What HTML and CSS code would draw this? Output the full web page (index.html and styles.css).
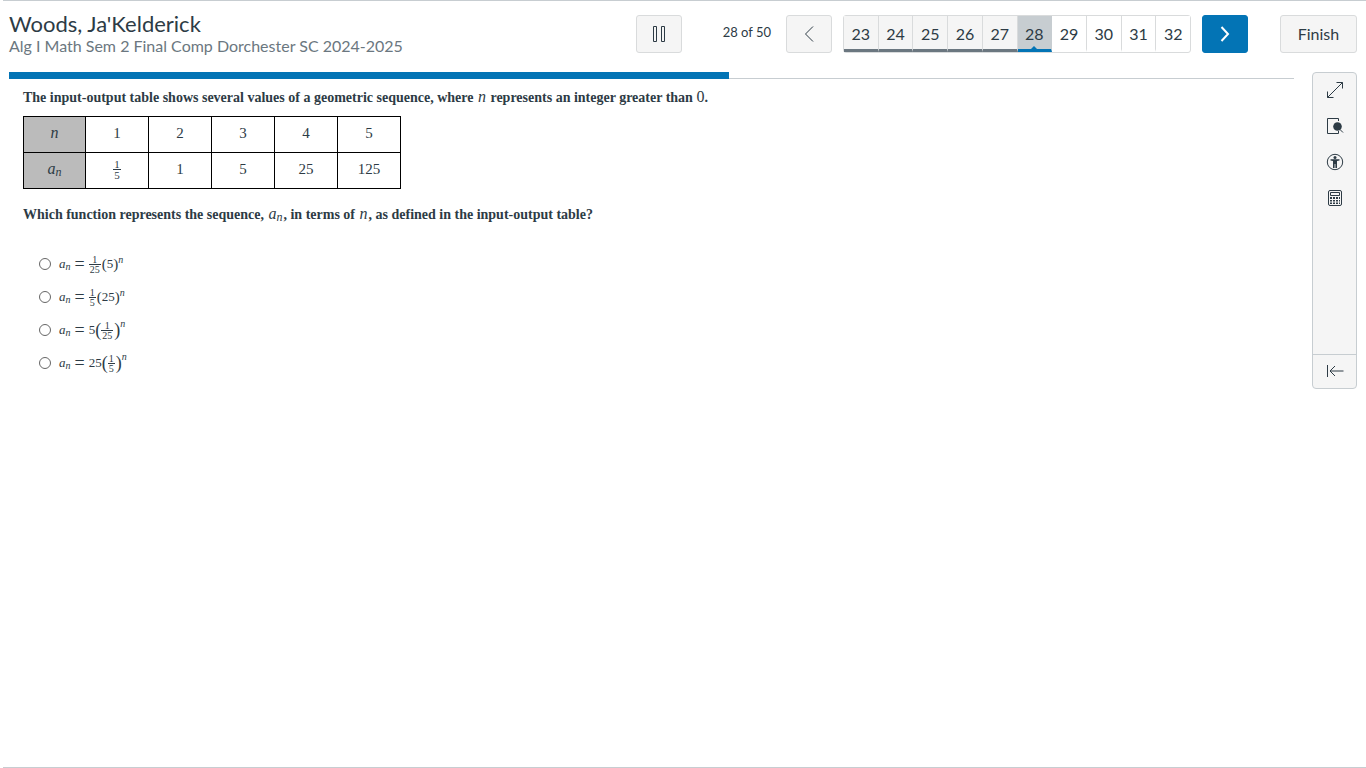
FILE: index.html
```html
<!DOCTYPE html>
<html lang="en">
<head>
    <meta charset="UTF-8">
    <meta name="viewport" content="width=device-width, initial-scale=1.0">
    <title>Alg I Math Sem 2 Final</title>
    <link rel="stylesheet" href="styles.css">
</head>
<body>
    <div class="player">
        <header class="header">
            <div class="student">
                <h1>Woods, Ja'Kelderick</h1>
                <p>Alg I Math Sem 2 Final Comp Dorchester SC 2024-2025</p>
            </div>
            <button class="btn btn-icon" aria-label="Pause">
                <svg width="14" height="18" viewBox="0 0 14 18"><path d="M1.500 1.500h3v15h-3zM9.500 1.500h3v15h-3z"/></svg>
            </button>
            <span class="count">28 of 50</span>
            <button class="btn btn-icon" aria-label="Previous">
                <svg width="10" height="16" viewBox="0 0 10 16"><path d="M9 .5L1.500 8l7.500 7.500"/></svg>
            </button>
            <nav class="pages">
                <button class="done">23</button>
                <button class="done">24</button>
                <button class="done">25</button>
                <button class="done">26</button>
                <button class="done">27</button>
                <button class="current">28</button>
                <button>29</button>
                <button>30</button>
                <button>31</button>
                <button>32</button>
            </nav>
            <button class="btn btn-icon btn-next" aria-label="Next">
                <svg width="10" height="16" viewBox="0 0 10 16"><path d="M1.500 1L8 8l-6.500 7"/></svg>
            </button>
            <button class="btn btn-finish">Finish</button>
        </header>

        <div class="body">
            <main class="main">
                <div class="progress"><div class="progress-bar" style="width: 56%"></div></div>
                <div class="question">
                    <p class="stem">The input-output table shows several values of a geometric sequence, where <i class="var">n</i> represents an integer greater than <span class="num">0</span>.</p>

                    <table class="values">
                        <tr>
                            <th><i class="var">n</i></th>
                            <td>1</td>
                            <td>2</td>
                            <td>3</td>
                            <td>4</td>
                            <td>5</td>
                        </tr>
                        <tr>
                            <th><i class="var">a<sub>n</sub></i></th>
                            <td><span class="frac"><span>1</span><span>5</span></span></td>
                            <td>1</td>
                            <td>5</td>
                            <td>25</td>
                            <td>125</td>
                        </tr>
                    </table>

                    <p class="stem">Which function represents the sequence, <i class="var">a<sub>n</sub></i>, in terms of <i class="var">n</i>, as defined in the input-output table?</p>

                    <form class="options">
                        <label class="option">
                            <input type="radio" name="answer">
                            <span class="math"><i>a<sub>n</sub></i><span class="eq">=</span><span class="frac"><span>1</span><span>25</span></span><span class="paren">(</span>5<span class="paren">)</span><sup>n</sup></span>
                        </label>
                        <label class="option">
                            <input type="radio" name="answer">
                            <span class="math"><i>a<sub>n</sub></i><span class="eq">=</span><span class="frac"><span>1</span><span>5</span></span><span class="paren">(</span>25<span class="paren">)</span><sup>n</sup></span>
                        </label>
                        <label class="option">
                            <input type="radio" name="answer">
                            <span class="math"><i>a<sub>n</sub></i><span class="eq">=</span>5<span class="paren big">(</span><span class="frac"><span>1</span><span>25</span></span><span class="paren big">)</span><sup class="high">n</sup></span>
                        </label>
                        <label class="option">
                            <input type="radio" name="answer">
                            <span class="math"><i>a<sub>n</sub></i><span class="eq">=</span>25<span class="paren big">(</span><span class="frac"><span>1</span><span>5</span></span><span class="paren big">)</span><sup class="high">n</sup></span>
                        </label>
                    </form>
                </div>
            </main>

            <aside class="tools">
                <button aria-label="Full screen">
                    <svg width="18" height="18" viewBox="0 0 18 18"><path d="M1.500 16.500l15-15M10.500 1.500h6v6M1.500 10.500v6h6"/></svg>
                </button>
                <button aria-label="Magnifier">
                    <svg width="18" height="18" viewBox="0 0 18 18"><path d="M12.500 4V1.500h-11v15h11V14M14 12.500l3 3"/><circle class="solid" cx="11.500" cy="9.500" r="4.300"/></svg>
                </button>
                <button aria-label="Accessibility">
                    <svg width="18" height="18" viewBox="0 0 18 18"><circle cx="9" cy="9" r="7.700"/><circle class="solid" cx="9" cy="4.500" r="1.500"/><path class="solid" d="M4.500 6.200h9v1.200l-2.500 .600v7H9.400v-4h-.8v4H7V8l-2.500-.6z"/></svg>
                </button>
                <button aria-label="Calculator">
                    <svg width="18" height="18" viewBox="0 0 18 18"><rect x="2.500" y="1.500" width="13" height="15" rx="1.500"/><path d="M4.500 3.500h9v3h-9z"/><path class="solid" d="M4 8h2v2H4zM7 8h2v2H7zM10 8h2v2h-2zM13 8h1v2h-1zM4 11h2v1.500H4zM7 11h2v1.500H7zM10 11h2v1.500h-2zM13 11h1v1.500h-1zM4 13.500h2V15H4zM7 13.500h2V15H7zM10 13.500h2V15h-2zM13 13.500h1V15h-1z"/></svg>
                </button>
                <button class="collapse" aria-label="Collapse">
                    <svg width="18" height="14" viewBox="0 0 18 14"><path d="M1.500 1v12M4.500 7h13M9 2L4 7l5 5"/></svg>
                </button>
            </aside>
        </div>
    </div>
</body>
</html>
```
FILE: styles.css
```css
* {
    box-sizing: border-box;
    margin: 0;
    padding: 0;
}

body {
    font-family: Lato, sans-serif;
    color: #2d3b45;
    background-color: #fff;
}

button {
    font-family: inherit;
    font-size: 16px;
    color: #2d3b45;
    cursor: pointer;
}

svg {
    display: block;
    fill: none;
    stroke: #2d3b45;
}

.solid {
    fill: #2d3b45;
    stroke: none;
}

.player {
    min-height: 100vh;
    margin-left: 3px;
    border-top: 1px solid #c7cdd1;
    border-bottom: 1px solid #c7cdd1;
    padding: 14px 9px 0 6px;
}

/* Header */
.header {
    display: flex;
    align-items: flex-start;
    height: 57px;
}

.student {
    flex: 1;
}

.student h1 {
    font-size: 22px;
    font-weight: normal;
    line-height: 18px;
}

.student p {
    font-size: 16px;
    line-height: 26px;
    color: #6b7780;
}

.btn {
    height: 38px;
    background-color: #f5f5f5;
    border: 1px solid #d9dbdc;
    border-radius: 3px;
}

.btn-icon {
    display: flex;
    align-items: center;
    justify-content: center;
    width: 46px;
}

.count {
    margin: 0 15px 0 41px;
    font-size: 13px;
    line-height: 34px;
}

.pages {
    display: flex;
    width: 348px;
    height: 38px;
    margin: 0 11px;
    border: 1px solid #d9dbdc;
    border-radius: 3px;
}

.pages button {
    position: relative;
    flex: 1;
    background-color: #fff;
    border: none;
    border-right: 1px solid #d9dbdc;
    border-bottom: 3px solid transparent;
    background-clip: padding-box;
    padding-top: 1px;
}

.pages button:last-child {
    border-right: none;
}

.pages .done {
    background-color: #f5f5f5;
    border-bottom-color: #6b7780;
}

.pages .current {
    background-color: #c7cdd1;
    border-right-color: #c7cdd1;
    border-bottom-color: #0374b5;
}

.pages .current::after {
    content: "";
    position: absolute;
    left: 50%;
    bottom: 0;
    margin-left: -3px;
    border: 3px solid transparent;
    border-top: none;
    border-bottom-color: #0374b5;
}

.btn-next {
    background-color: #0374b5;
    border-color: #0374b5;
}

.btn-next svg {
    stroke: #fff;
    stroke-width: 2;
}

.btn-finish {
    width: 77px;
    margin-left: 32px;
    padding-bottom: 2px;
}

/* Question area */
.body {
    display: flex;
    align-items: flex-start;
    gap: 18px;
}

.main {
    flex: 1;
}

.progress {
    height: 7px;
    border-bottom: 1px solid #c7cdd1;
}

.progress-bar {
    height: 7px;
    background-color: #0374b5;
}

.question {
    padding: 9px 14px;
    font-family: "Liberation Serif", serif;
}

.stem {
    font-size: 14px;
    font-weight: bold;
    line-height: 20px;
}

.stem .var {
    margin: 0 1px;
}

.var {
    font-size: 16px;
    font-weight: normal;
    line-height: 16px;
}

.num {
    font-size: 16px;
    font-weight: normal;
    line-height: 16px;
}

sub, sup {
    font-size: 12px;
    font-style: italic;
    line-height: 0;
}

sub {
    vertical-align: -2px;
}

.values {
    margin: 8px 0 16px;
    border-collapse: collapse;
    table-layout: fixed;
    width: 378px;
}

.values th, .values td {
    height: 36px;
    padding-bottom: 3px;
    border: 1px solid #000;
    text-align: center;
    vertical-align: middle;
    font-size: 15px;
    line-height: 16px;
}

.values th {
    width: 62px;
    background-color: #bbb;
}

.frac {
    display: inline-flex;
    flex-direction: column;
    vertical-align: middle;
    text-align: center;
    font-size: 11px;
    line-height: 10px;
}

.frac span {
    padding: 0 1px;
}

.frac span:first-child {
    border-bottom: 1px solid #2d3b45;
}

.options {
    display: flex;
    flex-direction: column;
    align-items: flex-start;
    gap: 9px;
    padding: 27px 16px;
}

.option {
    display: flex;
    align-items: center;
    gap: 8px;
    height: 24px;
    cursor: pointer;
}

.option input {
    appearance: none;
    width: 12px;
    height: 12px;
    border: 1px solid #666;
    border-radius: 50%;
}

.option input:checked {
    border: 4px solid #0374b5;
}

.math {
    display: flex;
    align-items: center;
    font-size: 13px;
    line-height: 16px;
}

.math .eq {
    margin: 0 4px;
    font-size: 18px;
}

.math .frac {
    margin-right: 1px;
    font-size: 10px;
    line-height: 9px;
}

.math .paren {
    font-size: 15px;
}

.math .big {
    font-size: 18px;
}

.math sub, .math sup {
    font-size: 10px;
}

.math sup {
    padding-bottom: 8px;
}

.math .high {
    padding-bottom: 12px;
}

/* Right toolbar */
.tools {
    display: flex;
    flex-direction: column;
    width: 45px;
    min-height: 317px;
    background-color: #f5f5f5;
    border: 1px solid #c7cdd1;
    border-radius: 4px;
}

.tools button {
    display: flex;
    align-items: center;
    justify-content: center;
    height: 36px;
    padding-bottom: 2px;
    background: none;
    border: none;
}

.tools .collapse {
    height: 34px;
    margin-top: auto;
    border-top: 1px solid #c7cdd1;
}
```
